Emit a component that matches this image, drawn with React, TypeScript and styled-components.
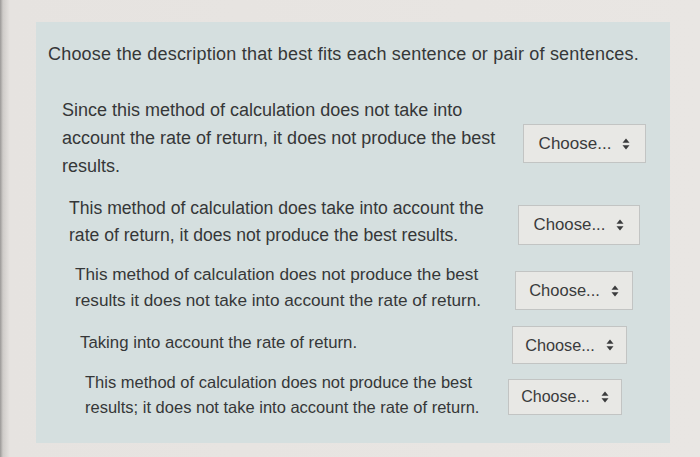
import React from "react";
import styled, { createGlobalStyle } from "styled-components";

const Global = createGlobalStyle`
  html, body { margin: 0; padding: 0; }
  body {
    background: #e7e4e1;
    font-family: "Liberation Sans", Arial, sans-serif;
    color: #353738;
    width: 700px;
    height: 457px;
    overflow: hidden;
  }
`;

const Page = styled.div`
  width: 700px;
  height: 457px;
  box-sizing: border-box;
  padding: 22px 30px 14px 36px;
  background: linear-gradient(90deg, #9a9896 0px, #cfccc9 3px, #e6e3e0 10px, #e9e6e3 100%);
  display: flex;
`;

const Panel = styled.div`
  flex: 1;
  min-width: 0;
  background: #d5dfdf;
  padding: 20px 0 0 12px;
  display: flex;
  flex-direction: column;
`;

const Title = styled.div`
  font-size: 18px;
  line-height: 24px;
  letter-spacing: 0.2px;
`;

const Row = styled.div<{ $mt: number; $pl: number; $pr: number }>`
  display: flex;
  align-items: flex-start;
  justify-content: space-between;
  margin-top: ${(p) => p.$mt}px;
  padding-left: ${(p) => p.$pl}px;
  padding-right: ${(p) => p.$pr}px;
`;

const Sentence = styled.div<{ $lh: number; $pt: number; $fs: number }>`
  font-size: ${(p) => p.$fs}px;
  line-height: ${(p) => p.$lh}px;
  padding-top: ${(p) => p.$pt}px;
  white-space: nowrap;
`;

const Select = styled.div<{ $mt: number; $w: number; $h: number; $fs: number }>`
  margin-top: ${(p) => p.$mt}px;
  width: ${(p) => p.$w}px;
  height: ${(p) => p.$h}px;
  box-sizing: border-box;
  background: #e8e8e5;
  border: 1px solid #c2c4c3;
  display: flex;
  align-items: center;
  justify-content: center;
  gap: 11px;
  font-size: ${(p) => p.$fs}px;
  color: #3a3b3c;
  flex-shrink: 0;
`;

const Arrows = () => (
  <svg width="8" height="12" viewBox="0 0 8 12">
    <path d="M4 0.5 L7.5 4.8 L0.5 4.8 Z" fill="#3a3b3c" />
    <path d="M4 11.5 L7.5 7.2 L0.5 7.2 Z" fill="#3a3b3c" />
  </svg>
);

type RowData = {
  lines: string[];
  mt: number;
  pl: number;
  pr: number;
  lh: number;
  pt: number;
  fs: number;
  smt: number;
  sw: number;
  sh: number;
  sfs: number;
};

const rows: RowData[] = [
  {
    lines: [
      "Since this method of calculation does not take into",
      "account the rate of return, it does not produce the best",
      "results.",
    ],
    mt: 30, pl: 14, pr: 24, lh: 28, pt: 0, fs: 18, smt: 28, sw: 123, sh: 39, sfs: 17,
  },
  {
    lines: [
      "This method of calculation does take into account the",
      "rate of return, it does not produce the best results.",
    ],
    mt: 15, pl: 21, pr: 30, lh: 27, pt: 0, fs: 17.6, smt: 10, sw: 122, sh: 40, sfs: 16.8,
  },
  {
    lines: [
      "This method of calculation does not produce the best",
      "results it does not take into account the rate of return.",
    ],
    mt: 12, pl: 27, pr: 37, lh: 26, pt: 0, fs: 17.2, smt: 10, sw: 118, sh: 39, sfs: 16.5,
  },
  {
    lines: ["Taking into account the rate of return."],
    mt: 13, pl: 32, pr: 43, lh: 26, pt: 4, fs: 16.8, smt: 0, sw: 115, sh: 38, sfs: 16.3,
  },
  {
    lines: [
      "This method of calculation does not produce the best",
      "results; it does not take into account the rate of return.",
    ],
    mt: 6, pl: 37, pr: 48, lh: 25, pt: 0, fs: 16.5, smt: 9, sw: 114, sh: 36, sfs: 16,
  },
];

export default function App() {
  return (
    <>
      <Global />
      <Page>
        <Panel>
          <Title>Choose the description that best fits each sentence or pair of sentences.</Title>
          {rows.map((r, i) => (
            <Row key={i} $mt={r.mt} $pl={r.pl} $pr={r.pr}>
              <Sentence $lh={r.lh} $pt={r.pt} $fs={r.fs}>
                {r.lines.map((l, j) => (
                  <React.Fragment key={j}>
                    {l}
                    {j < r.lines.length - 1 && <br />}
                  </React.Fragment>
                ))}
              </Sentence>
              <Select $mt={r.smt} $w={r.sw} $h={r.sh} $fs={r.sfs}>
                <span>Choose...</span>
                <Arrows />
              </Select>
            </Row>
          ))}
        </Panel>
      </Page>
    </>
  );
}
